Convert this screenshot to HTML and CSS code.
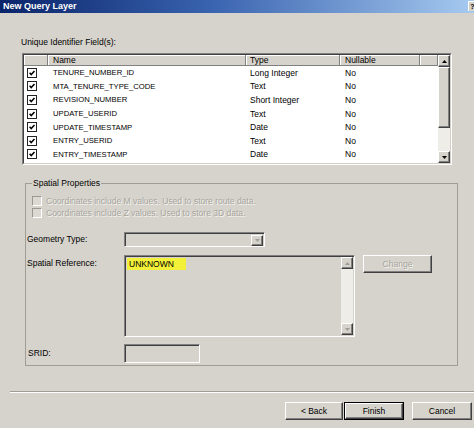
FILE: index.html
```html
<!DOCTYPE html>
<html>
<head>
<meta charset="utf-8">
<link rel="stylesheet" href="styles.css">
</head>
<body>
<div class="window">
  <div class="titlebar">
    <span class="title">New Query Layer</span>
    <span class="help">?</span>
  </div>
  <div class="body">
    <div class="caption">Unique Identifier Field(s):</div>
    <div class="list">
      <div class="list-inner">
        <div class="grid">
          <div class="hdr">
            <div class="c0 h"></div>
            <div class="c1 h">Name</div>
            <div class="c2 h">Type</div>
            <div class="c3 h">Nullable</div>
            <div class="c4 h"></div>
          </div>
          <div class="row"><div class="c0"><span class="chk"><svg viewBox="0 0 9 9"><path d="M1.8 4.2 L3.6 6.2 L7.3 2.2" /></svg></span></div><div class="c1 up">TENURE_NUMBER_ID</div><div class="c2">Long Integer</div><div class="c3">No</div></div>
          <div class="row"><div class="c0"><span class="chk"><svg viewBox="0 0 9 9"><path d="M1.8 4.2 L3.6 6.2 L7.3 2.2" /></svg></span></div><div class="c1 up">MTA_TENURE_TYPE_CODE</div><div class="c2">Text</div><div class="c3">No</div></div>
          <div class="row"><div class="c0"><span class="chk"><svg viewBox="0 0 9 9"><path d="M1.8 4.2 L3.6 6.2 L7.3 2.2" /></svg></span></div><div class="c1 up">REVISION_NUMBER</div><div class="c2">Short Integer</div><div class="c3">No</div></div>
          <div class="row"><div class="c0"><span class="chk"><svg viewBox="0 0 9 9"><path d="M1.8 4.2 L3.6 6.2 L7.3 2.2" /></svg></span></div><div class="c1 up">UPDATE_USERID</div><div class="c2">Text</div><div class="c3">No</div></div>
          <div class="row"><div class="c0"><span class="chk"><svg viewBox="0 0 9 9"><path d="M1.8 4.2 L3.6 6.2 L7.3 2.2" /></svg></span></div><div class="c1 up">UPDATE_TIMESTAMP</div><div class="c2">Date</div><div class="c3">No</div></div>
          <div class="row"><div class="c0"><span class="chk"><svg viewBox="0 0 9 9"><path d="M1.8 4.2 L3.6 6.2 L7.3 2.2" /></svg></span></div><div class="c1 up">ENTRY_USERID</div><div class="c2">Text</div><div class="c3">No</div></div>
          <div class="row"><div class="c0"><span class="chk"><svg viewBox="0 0 9 9"><path d="M1.8 4.2 L3.6 6.2 L7.3 2.2" /></svg></span></div><div class="c1 up">ENTRY_TIMESTAMP</div><div class="c2">Date</div><div class="c3">No</div></div>
          <div class="row"><div class="c0"><span class="chk"><svg viewBox="0 0 9 9"><path d="M1.8 4.2 L3.6 6.2 L7.3 2.2" /></svg></span></div></div>
        </div>
        <div class="vscroll">
          <div class="sbtn"><svg viewBox="0 0 7 4"><path d="M3.5 0 L7 4 L0 4 Z"/></svg></div>
          <div class="thumb"></div>
          <div class="track"></div>
          <div class="sbtn"><svg viewBox="0 0 7 4"><path d="M0 0 L7 0 L3.5 4 Z"/></svg></div>
        </div>
      </div>
    </div>

    <fieldset class="group">
      <legend>Spatial Properties</legend>
      <div class="opt"><span class="dchk"></span><span class="dis">Coordinates include M values. Used to store route data.</span></div>
      <div class="opt"><span class="dchk"></span><span class="dis">Coordinates include Z values. Used to store 3D data.</span></div>
      <div class="frow geo">
        <div class="lbl">Geometry Type:</div>
        <div class="combo">
          <div class="combo-btn"><svg viewBox="0 0 7 4"><path d="M0 0 L7 0 L3.5 4 Z"/></svg></div>
        </div>
      </div>
      <div class="frow sref">
        <div class="lbl top">Spatial Reference:</div>
        <div class="srbox">
          <div class="srtext"><span class="hl">UNKNOWN</span></div>
          <div class="vscroll dim">
            <div class="sbtn"><svg viewBox="0 0 7 4"><path d="M3.5 0 L7 4 L0 4 Z"/></svg></div>
            <div class="track"></div>
            <div class="sbtn"><svg viewBox="0 0 7 4"><path d="M0 0 L7 0 L3.5 4 Z"/></svg></div>
          </div>
        </div>
        <div class="btn change"><span class="dis">Change</span></div>
      </div>
      <div class="frow srid">
        <div class="lbl">SRID:</div>
        <div class="sridbox"></div>
      </div>
    </fieldset>
  </div>
  <div class="sep"></div>
  <div class="buttons">
    <div class="btn back">&lt; Back</div>
    <div class="btn finish"><div class="btn inner">Finish</div></div>
    <div class="btn cancel">Cancel</div>
  </div>
</div>
</body>
</html>
```

FILE: styles.css
```css
html, body {
  margin: 0;
  padding: 0;
}
body {
  background: #d6d3cc;
}
.window {
  width: 474px;
  height: 428px;
  background: #d6d3cc;
  position: relative;
  overflow: hidden;
  font-family: "Liberation Sans", Arial, sans-serif;
  font-size: 8.5px;
  color: #000;
}
.titlebar {
  height: 13px;
  background: linear-gradient(to right, #0a246a 0%, #3a64b0 45%, #a6caf0 100%);
  display: flex;
  align-items: center;
  padding-left: 3px;
}
.title {
  color: #fff;
  font-weight: bold;
  font-size: 9px;
  line-height: 13px;
}
.help {
  position: absolute;
  right: -2px;
  top: 1px;
  width: 8px;
  height: 10px;
  box-sizing: border-box;
  background: #d4d0c8;
  border-top: 1px solid #fff;
  border-left: 1px solid #fff;
  font-size: 7px;
  font-weight: bold;
  line-height: 9px;
  text-align: center;
  color: #000;
}
.body {
  padding: 24px 0 0 21px;
}
.caption {
  line-height: 10px;
  height: 10px;
}
.list {
  margin: 6px 0 0 1px;
  width: 430px;
  height: 112px;
  box-sizing: border-box;
  border: 1px solid;
  border-color: #808080 #fff #fff #808080;
}
.list-inner {
  height: 100%;
  box-sizing: border-box;
  border: 1px solid;
  border-color: #404040 #d4d0c8 #d4d0c8 #404040;
  display: flex;
  background: #fff;
}
.grid {
  flex: 1;
  overflow: hidden;
}
.hdr {
  display: flex;
  height: 11px;
  background: #d6d3cc;
}
.h {
  box-sizing: border-box;
  height: 11px;
  border-right: 1px solid #808080;
  border-bottom: 1px solid #808080;
  box-shadow: inset 1px 1px 0 #fff;
  line-height: 10px;
}
.c0 { width: 24px; flex: none; box-sizing: border-box; padding-left: 3px; }
.c1 { width: 198px; flex: none; box-sizing: border-box; padding-left: 5px; }
.c2 { width: 94px; flex: none; box-sizing: border-box; padding-left: 4px; }
.c3 { width: 80px; flex: none; box-sizing: border-box; padding-left: 5px; }
.c4 { flex: 1; }
.row {
  display: flex;
  height: 13.6px;
  align-items: center;
  white-space: nowrap;
}
.up {
  font-size: 7.7px;
}
.chk {
  display: block;
  width: 10px;
  height: 10px;
  box-sizing: border-box;
  border: 1px solid #222;
  background: #fff;
}
.chk svg {
  display: block;
  width: 8px;
  height: 8px;
}
.chk path {
  fill: none;
  stroke: #000;
  stroke-width: 1.7;
}
.vscroll {
  width: 12px;
  flex: none;
  display: flex;
  flex-direction: column;
  background: #eeede8;
}
.sbtn {
  height: 12px;
  flex: none;
  box-sizing: border-box;
  background: #d6d3cc;
  border: 1px solid;
  border-color: #fff #404040 #404040 #fff;
  box-shadow: inset -1px -1px 0 #808080;
  display: flex;
  align-items: center;
  justify-content: center;
}
.sbtn svg {
  width: 5px;
  height: 3px;
  display: block;
}
.sbtn path { fill: #000; }
.dim .sbtn path { fill: #a09e98; }
.thumb {
  height: 61px;
  flex: none;
  box-sizing: border-box;
  background: #d6d3cc;
  border: 1px solid;
  border-color: #fff #404040 #404040 #fff;
  box-shadow: inset -1px -1px 0 #808080;
}
.track {
  flex: 1;
}
.group {
  margin: 13px 0 0 4px;
  width: 433px;
  box-sizing: border-box;
  border: 1px solid #a09d96;
  padding: 0 0 2px 1px;
  min-width: 0;
}
.group legend {
  padding: 0 1px;
  margin-left: 5px;
  line-height: 10px;
  font-size: 8.5px;
}
.opt {
  display: flex;
  align-items: center;
  height: 12px;
  white-space: nowrap;
}
.opt:first-of-type {
  margin-top: 7px;
}
.dchk {
  width: 10px;
  height: 10px;
  box-sizing: border-box;
  margin: 0 4px 0 5px;
  border: 1px solid;
  border-color: #9a9892 #fff #fff #9a9892;
  background: #dcd9d3;
}
.dis {
  color: #a8a59e;
  text-shadow: 1px 1px 0 #f4f3f0;
}
.frow {
  display: flex;
  align-items: flex-start;
}
.lbl {
  width: 97px;
  flex: none;
  box-sizing: border-box;
}
.geo {
  margin-top: 13px;
  height: 15px;
}
.geo .lbl { line-height: 15px; }
.combo {
  width: 141px;
  height: 15px;
  box-sizing: border-box;
  border: 1px solid;
  border-color: #808080 #fff #fff #808080;
  box-shadow: inset 1px 1px 0 #404040;
  display: flex;
  justify-content: flex-end;
  padding: 2px 1px 1px 2px;
}
.combo-btn {
  width: 12px;
  height: 11px;
  box-sizing: border-box;
  background: #d6d3cc;
  border: 1px solid;
  border-color: #fff #404040 #404040 #fff;
  box-shadow: inset -1px -1px 0 #808080;
  display: flex;
  align-items: center;
  justify-content: center;
}
.combo-btn svg { width: 5px; height: 3px; display: block; }
.combo-btn path { fill: #a09e98; }
.sref {
  margin-top: 8px;
}
.lbl.top {
  padding-top: 3px;
  line-height: 10px;
}
.srbox {
  width: 231px;
  height: 82px;
  box-sizing: border-box;
  border: 1px solid;
  border-color: #808080 #fff #fff #808080;
  box-shadow: inset 1px 1px 0 #404040;
  padding: 1px 1px 1px 1px;
  display: flex;
}
.srtext {
  flex: 1;
  padding: 1px 0 0 1px;
}
.hl {
  display: inline-block;
  background: #f3f03a;
  padding: 0 12px 0 2px;
  line-height: 12px;
  height: 12px;
}
.btn {
  box-sizing: border-box;
  height: 18px;
  background: #d6d3cc;
  border: 1px solid;
  border-color: #fff #404040 #404040 #fff;
  box-shadow: inset -1px -1px 0 #808080;
  display: flex;
  align-items: center;
  justify-content: center;
  line-height: 10px;
}
.change {
  margin-left: 8px;
  width: 69px;
}
.srid {
  margin-top: 7px;
  height: 19px;
}
.srid .lbl {
  line-height: 19px;
  padding-left: 1px;
}
.sridbox {
  width: 76px;
  height: 19px;
  box-sizing: border-box;
  border: 1px solid;
  border-color: #808080 #fff #fff #808080;
  box-shadow: inset 1px 1px 0 #404040;
}
.sep {
  margin: 25px 0 0 10px;
  height: 0;
  border-top: 1px solid #a09d96;
  border-bottom: 1px solid #fff;
}
.buttons {
  display: flex;
  justify-content: flex-end;
  padding-right: 2px;
  margin-top: 9px;
}
.back { width: 58px; }
.finish {
  width: 60px;
  margin-left: 1px;
  border: 1px solid #000;
  box-shadow: none;
  padding: 0;
}
.btn.inner {
  width: 100%;
  height: 100%;
}
.cancel {
  width: 60px;
  margin-left: 8px;
}
```
